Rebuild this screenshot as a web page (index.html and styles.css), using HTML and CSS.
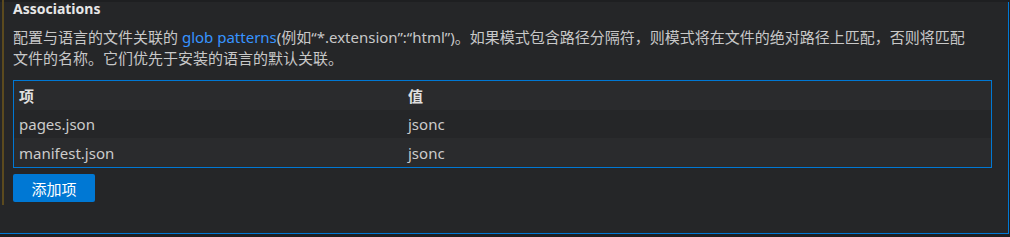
FILE: index.html
```html
<!DOCTYPE html>
<html lang="zh-CN">
<head>
    <meta charset="UTF-8">
    <title>Associations</title>
    <link rel="stylesheet" href="styles.css">
</head>
<body>
    <div class="setting-item">
        <div class="modified-bar"></div>
        <div class="setting-body">
            <div class="setting-title">Associations</div>
            <p class="setting-desc">配置与语言的文件关联的 <a class="link" href="#">glob patterns</a>(例如“*.extension”:“html”)。如果模式包含路径分隔符，则模式将在文件的绝对路径上匹配，否则将匹配文件的名称。它们优先于安装的语言的默认关联。</p>
            <div class="kv-table">
                <div class="kv-row kv-head">
                    <div class="kv-key">项</div>
                    <div class="kv-value">值</div>
                </div>
                <div class="kv-row">
                    <div class="kv-key">pages.json</div>
                    <div class="kv-value">jsonc</div>
                </div>
                <div class="kv-row alt">
                    <div class="kv-key">manifest.json</div>
                    <div class="kv-value">jsonc</div>
                </div>
            </div>
            <button class="add-btn">添加项</button>
        </div>
    </div>
</body>
</html>
```

FILE: styles.css
```css
* {
    margin: 0;
    padding: 0;
    box-sizing: border-box;
}

body {
    font-family: 'Noto Sans', 'Noto Sans CJK SC', sans-serif;
    font-size: 15px;
    background: #1e1f21;
    color: #cccccc;
    width: 1010px;
    height: 237px;
    overflow: hidden;
}

.setting-item {
    margin-top: 2px;
    width: 1009px;
    height: 232px;
    background: #252628;
    border-right: 1px solid #0078d4;
    border-bottom: 1px solid #0078d4;
    display: flex;
    align-items: flex-start;
}

.modified-bar {
    flex-shrink: 0;
    width: 2px;
    height: 205px;
    margin-left: 2px;
    margin-top: -2px;
    background: #5b4a1e;
}

.setting-body {
    padding-left: 9px;
    width: 988px;
}

.setting-title {
    font-size: 14px;
    font-weight: bold;
    color: #e7e7e7;
    line-height: 14px;
}

.setting-desc {
    width: 965px;
    margin-top: 11px;
    line-height: 20.7px;
    color: #c8c8c8;
}

.link {
    color: #3794ff;
    text-decoration: none;
}

.kv-table {
    margin-top: 12px;
    width: 979px;
    border: 1px solid #0078d4;
}

.kv-row {
    display: flex;
    height: 28px;
    align-items: center;
    background: #252628;
}

.kv-head {
    height: 29px;
    background: #2a2b2d;
    font-weight: bold;
    color: #e0e0e0;
}

.kv-row.alt {
    height: 29px;
    background: #2a2b2d;
}

.kv-key {
    width: 389px;
    padding-left: 5px;
}

.kv-value {
    flex: 1;
    padding-left: 5px;
}

.add-btn {
    margin-top: 6px;
    width: 82px;
    height: 28px;
    border: none;
    border-radius: 2px;
    background: #0078d4;
    color: #ffffff;
    font-family: inherit;
    font-size: 15px;
}
```
